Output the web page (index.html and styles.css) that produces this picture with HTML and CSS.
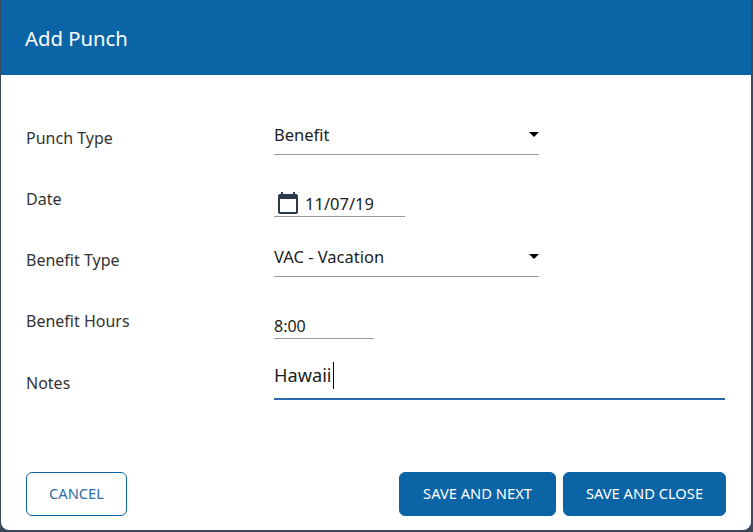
FILE: index.html
```html
<!DOCTYPE html>
<html lang="en">
<head>
    <meta charset="UTF-8">
    <meta name="viewport" content="width=device-width, initial-scale=1.0">
    <title>Add Punch</title>
    <link rel="stylesheet" href="styles.css">
</head>
<body>
    <div class="dialog">
        <div class="header">
            <h1 class="title">Add Punch</h1>
        </div>

        <div class="form">
            <div class="form-row">
                <span class="form-label">Punch Type</span>
                <div class="field field-select">
                    <span class="field-value">Benefit</span>
                    <svg class="arrow" viewBox="0 0 10 5"><path d="M0 0h10L5 5z"/></svg>
                </div>
            </div>

            <div class="form-row">
                <span class="form-label">Date</span>
                <div class="field field-date">
                    <svg class="calendar" viewBox="0 0 24 24"><path d="M20 3h-1V1h-2v2H7V1H5v2H4c-1.1 0-2 .9-2 2v16c0 1.1.9 2 2 2h16c1.1 0 2-.9 2-2V5c0-1.1-.9-2-2-2zm0 18H4V8h16v13z"/></svg>
                    <span class="field-value">11/07/19</span>
                </div>
            </div>

            <div class="form-row">
                <span class="form-label">Benefit Type</span>
                <div class="field field-select">
                    <span class="field-value">VAC - Vacation</span>
                    <svg class="arrow" viewBox="0 0 10 5"><path d="M0 0h10L5 5z"/></svg>
                </div>
            </div>

            <div class="form-row">
                <span class="form-label">Benefit Hours</span>
                <div class="field field-hours">
                    <span class="field-value">8:00</span>
                </div>
            </div>

            <div class="form-row">
                <span class="form-label">Notes</span>
                <div class="field field-notes">
                    <span class="field-value">Hawaii</span><span class="caret"></span>
                </div>
            </div>
        </div>

        <div class="footer">
            <button class="button button-outline">CANCEL</button>
            <div class="footer-right">
                <button class="button button-next">SAVE AND NEXT</button>
                <button class="button button-close">SAVE AND CLOSE</button>
            </div>
        </div>
    </div>
</body>
</html>
```

FILE: styles.css
```css
:root {
    --blue: #0b64a5;
    --frame: #3b4859;
    --line: #9a9a9a;
}

html, body {
    height: 100%;
}

body {
    margin: 0;
    padding: 0 2px 2px 1px;
    box-sizing: border-box;
    height: 532px;
    overflow: hidden;
    background: var(--frame);
    font-family: "Noto Sans", sans-serif;
    color: #333333;
}

.dialog {
    height: 100%;
    display: flex;
    flex-direction: column;
    background: #FFFFFF;
    border-radius: 0 0 8px 8px;
}

.header {
    height: 75px;
    flex-shrink: 0;
    display: flex;
    align-items: center;
    padding: 0 24px;
    background: var(--blue);
}

.title {
    margin: 0;
    font-size: 20.3px;
    font-weight: 400;
    color: #FFFFFF;
}

.form {
    display: grid;
    grid-template-rows: 61px 62px 60px 62px 61px;
    padding: 19px 26px 0 25px;
}

.form-row {
    display: flex;
    align-items: flex-end;
}

.form-label {
    width: 248px;
    flex-shrink: 0;
    margin-bottom: 7px;
    font-size: 16px;
    line-height: 22px;
}

.form-row:nth-child(odd) .form-label {
    margin-bottom: 6px;
}

.field {
    display: flex;
    align-items: center;
    box-sizing: border-box;
    border-bottom: 1px solid var(--line);
    color: #1c1c1c;
}

.field-value {
    font-size: 16.5px;
    line-height: 22px;
}

.field-select {
    width: 265px;
    justify-content: space-between;
    padding-bottom: 8px;
}

.arrow {
    width: 10px;
    height: 5px;
    margin-top: -2px;
}

.field-date {
    width: 131px;
    gap: 5px;
    padding-left: 2px;
    height: 27px;
}

.field-date .field-value {
    margin-top: 1px;
}

.calendar {
    width: 24px;
    height: 24px;
    flex-shrink: 0;
    margin-bottom: 1px;
    fill: #2b3a4a;
}

.field-hours {
    width: 100px;
    padding-bottom: 1px;
}

.field-hours .field-value {
    font-size: 16px;
}

.field-notes {
    flex-grow: 1;
    border-bottom: 2px solid #2a6aa6;
    padding-bottom: 9px;
}

.field-notes .field-value {
    font-size: 18.2px;
    line-height: 27px;
}

.caret {
    width: 1px;
    height: 27px;
    margin-left: 1px;
    background: #000000;
}

.footer {
    margin-top: auto;
    display: flex;
    justify-content: space-between;
    padding: 0 25px 14px 25px;
}

.footer-right {
    display: flex;
    gap: 7px;
}

.button {
    box-sizing: border-box;
    height: 44px;
    padding: 0 0 2px;
    border: 1px solid var(--blue);
    border-radius: 6px;
    background: var(--blue);
    color: #FFFFFF;
    font-family: "Noto Sans", sans-serif;
    font-size: 14.7px;
}

.button-outline {
    width: 101px;
    background: #FFFFFF;
    color: #2b6ea5;
}

.button-next {
    width: 157px;
}

.button-close {
    width: 163px;
}
```
